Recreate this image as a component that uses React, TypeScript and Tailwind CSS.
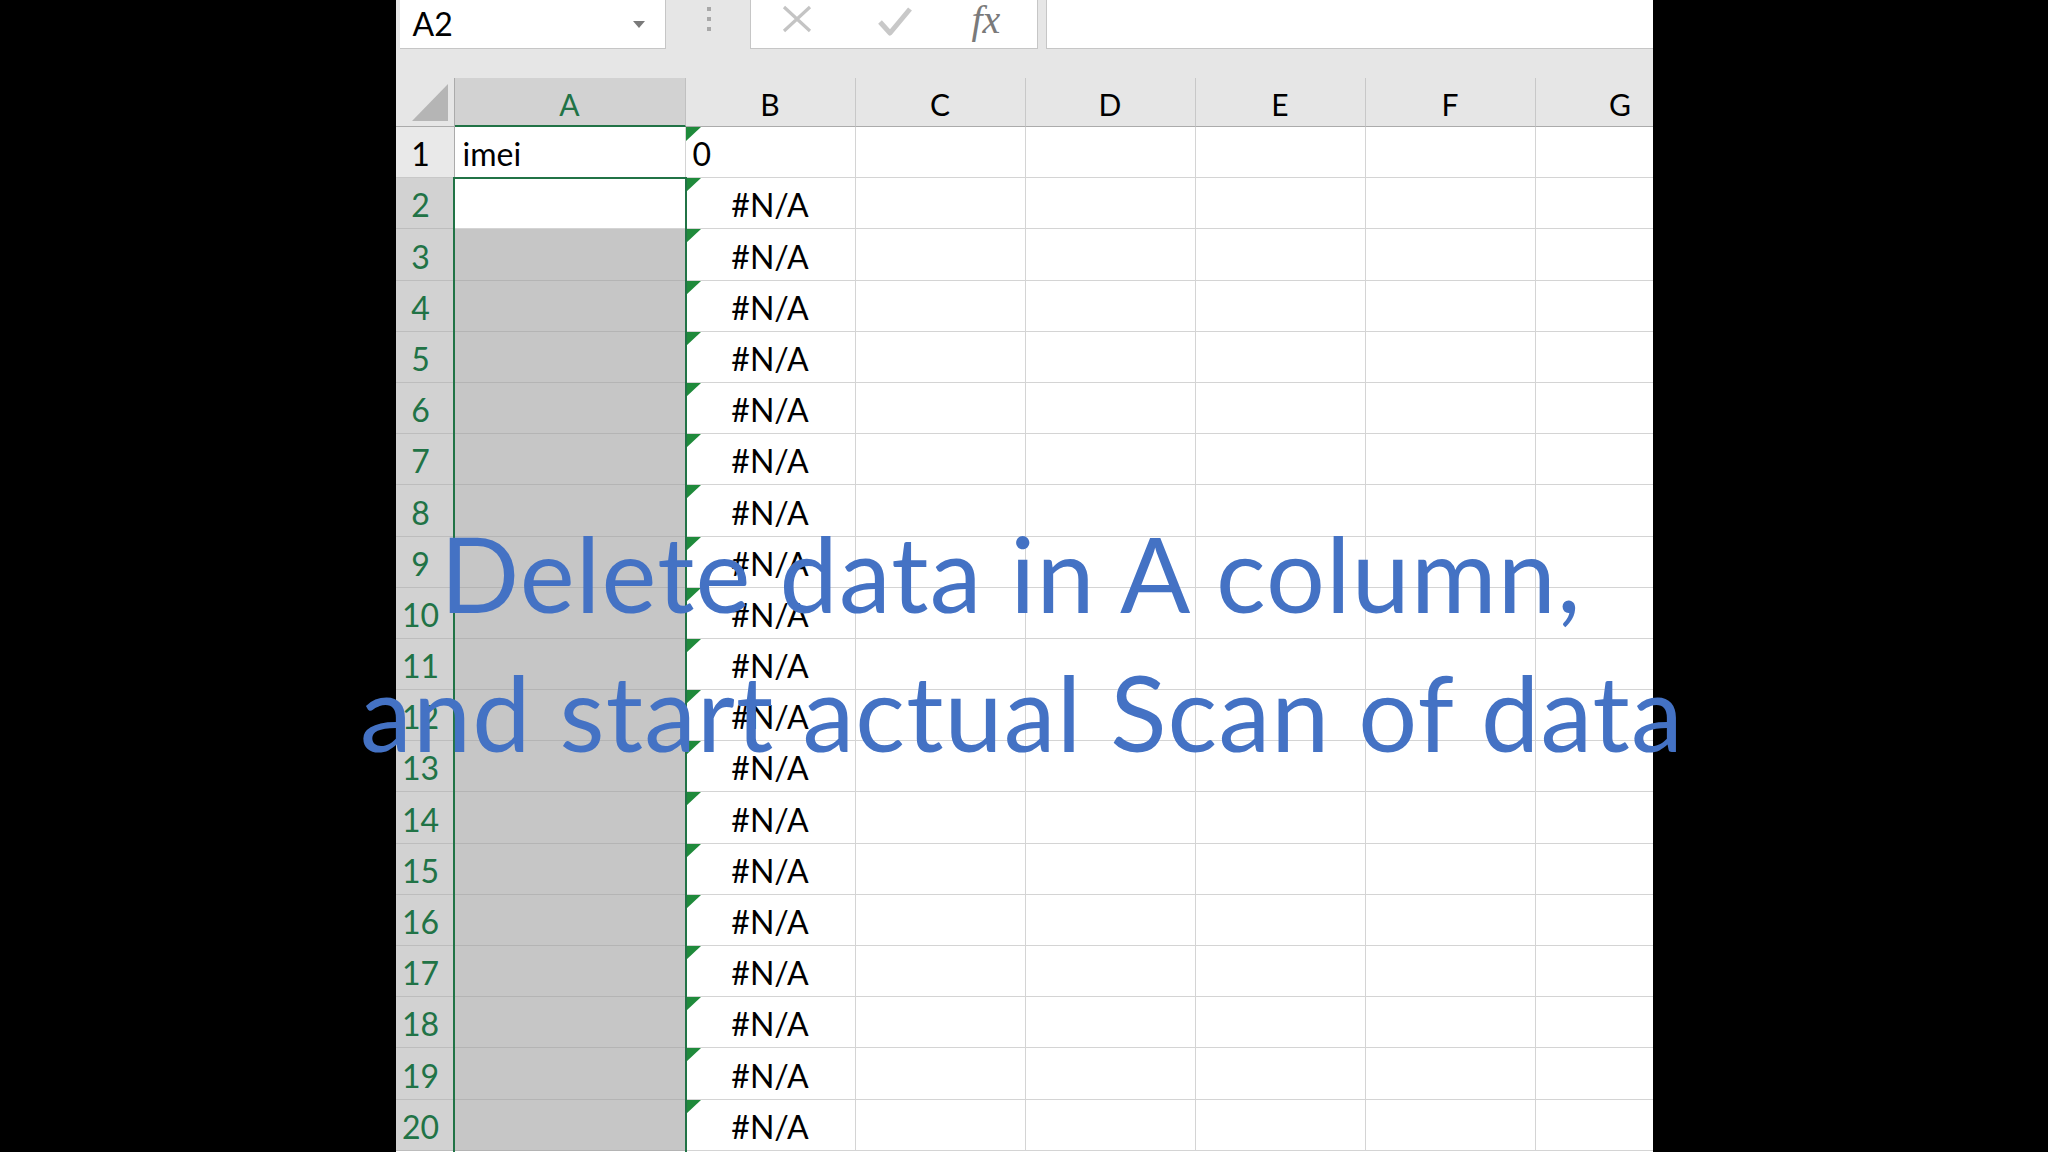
const COLS = ["A", "B", "C", "D", "E", "F", "G"]
const ROWS = Array.from({ length: 20 }, (_, i) => i + 1)

function ErrorMark() {
  return (
    <svg className="absolute left-0 top-0" width="15" height="14" viewBox="0 0 15 14">
      <polygon points="0,0 15,0 0,14" fill="#1f8a3b" />
    </svg>
  )
}

function Toolbar() {
  return (
    <div className="flex h-[78px] items-start bg-[#e6e6e6]">
      <div className="ml-[4px] flex h-[49px] w-[266px] items-center justify-between border-b border-r border-[#c6c6c6] bg-white pl-[13px] pr-[20px]">
        <span className="text-[32px] leading-none text-black">A2</span>
        <svg width="12" height="7" viewBox="0 0 12 7">
          <polygon points="0,0 12,0 6,7" fill="#7a7a7a" />
        </svg>
      </div>
      <div className="ml-[41px] mt-[7px] flex flex-col gap-[6px]">
        <span className="h-[4px] w-[4px] bg-[#a8a8a8]" />
        <span className="h-[4px] w-[4px] bg-[#a8a8a8]" />
        <span className="h-[4px] w-[4px] bg-[#a8a8a8]" />
      </div>
      <div className="relative ml-[39px] h-[49px] w-[288px] border-b border-l border-r border-[#c6c6c6] bg-white">
        <svg className="absolute left-[30px] top-[5px]" width="32" height="28" viewBox="0 0 32 28">
          <path d="M3 2 L29 26 M29 2 L3 26" stroke="#c4c4c4" strokeWidth="3.2" fill="none" />
        </svg>
        <svg className="absolute left-[126px] top-[6px]" width="36" height="30" viewBox="0 0 36 30">
          <path d="M3 16 L13 27 L33 3" stroke="#c8c8c8" strokeWidth="5" fill="none" strokeLinejoin="round" />
        </svg>
        <span className="absolute left-[221px] top-[-2px] font-['Liberation_Serif',serif] text-[40px] italic leading-[44px] text-[#7a7a7a]">
          fx
        </span>
      </div>
      <div className="ml-[8px] h-[49px] flex-1 border-b border-l border-[#c6c6c6] bg-white" />
    </div>
  )
}

export default function App() {
  return (
    <div className="flex h-[1152px] w-full justify-center overflow-hidden bg-black font-[Lato,sans-serif]">
      <div className="relative h-[1152px] w-[1257px] bg-white">
        <Toolbar />
        <div className="relative h-[1074px] overflow-hidden">
          <div className="grid w-[1310px] grid-cols-[59px_231px_170px_170px_170px_170px_170px_170px]">
            {/* header row */}
            <div className="relative h-[49px] border-b border-r border-[#ababab] bg-[#e6e6e6]">
              <svg className="absolute bottom-[5px] right-[6px]" width="36" height="37" viewBox="0 0 36 37">
                <polygon points="36,0 36,37 0,37" fill="#b5b5b5" />
              </svg>
            </div>
            {COLS.map((c) => (
              <div
                key={c}
                className={
                  c === "A"
                    ? "flex h-[49px] items-center justify-center border-b-2 border-r border-b-[#217346] border-r-[#c0c0c0] bg-[#d2d2d2] pt-[4px] text-[30px] leading-none text-[#217346]"
                    : "flex h-[49px] items-center justify-center border-b border-r border-b-[#ababab] border-r-[#c8c8c8] bg-[#e6e6e6] pt-[4px] text-[30px] leading-none text-black"
                }
              >
                {c}
              </div>
            ))}
            {ROWS.map((r) => (
              <div key={r} className="contents">
                <div
                  className={
                    r === 1
                      ? "flex h-[51.2px] items-end justify-center border-b border-r border-b-[#c8c8c8] border-r-[#ababab] bg-[#e9e9e9] pb-[7px] pr-[8px] text-[32px] leading-none text-black"
                      : "flex h-[51.2px] items-end justify-center border-b border-r border-b-[#bdbdbd] border-r-[#ababab] bg-[#d2d2d2] pb-[7px] pr-[8px] text-[32px] leading-none text-[#217346]"
                  }
                >
                  {r}
                </div>
                <div
                  className={
                    r === 1
                      ? "flex h-[51.2px] items-end border-b border-r border-[#d4d4d4] bg-white pb-[7px] pl-[8px] text-[32px] leading-none text-black"
                      : r === 2
                        ? "h-[51.2px] border-b border-r border-[#d4d4d4] bg-white"
                        : "h-[51.2px] border-b border-r border-[#b4b4b4] bg-[#c6c6c6]"
                  }
                >
                  {r === 1 ? "imei" : null}
                </div>
                <div
                  className={
                    r === 1
                      ? "relative flex h-[51.2px] items-end border-b border-r border-[#d4d4d4] bg-white pb-[7px] pl-[7px] text-[32px] leading-none text-black"
                      : "relative flex h-[51.2px] items-end justify-center border-b border-r border-[#d4d4d4] bg-white pb-[7px] text-[32px] leading-none text-black"
                  }
                >
                  <ErrorMark />
                  {r === 1 ? "0" : "#N/A"}
                </div>
                <div className="h-[51.2px] border-b border-r border-[#d4d4d4]" />
                <div className="h-[51.2px] border-b border-r border-[#d4d4d4]" />
                <div className="h-[51.2px] border-b border-r border-[#d4d4d4]" />
                <div className="h-[51.2px] border-b border-r border-[#d4d4d4]" />
                <div className="h-[51.2px] border-b border-r border-[#d4d4d4]" />
              </div>
            ))}
          </div>

          {/* selection A2:A20 */}
          <div className="pointer-events-none absolute left-[57px] top-[99px] h-[1000px] w-[234px] border-2 border-[#217346]" />
        </div>

        {/* caption */}
        <div className="pointer-events-none absolute left-[-300px] right-[-300px] top-[503px] text-center text-[104px] leading-[139px] tracking-[1.2px] whitespace-nowrap text-[#4472c4]">
          <div className="pr-[26px]">Delete data in A column,</div>
          <div className="pr-[4px]">and start actual Scan of data</div>
        </div>
      </div>
    </div>
  )
}
